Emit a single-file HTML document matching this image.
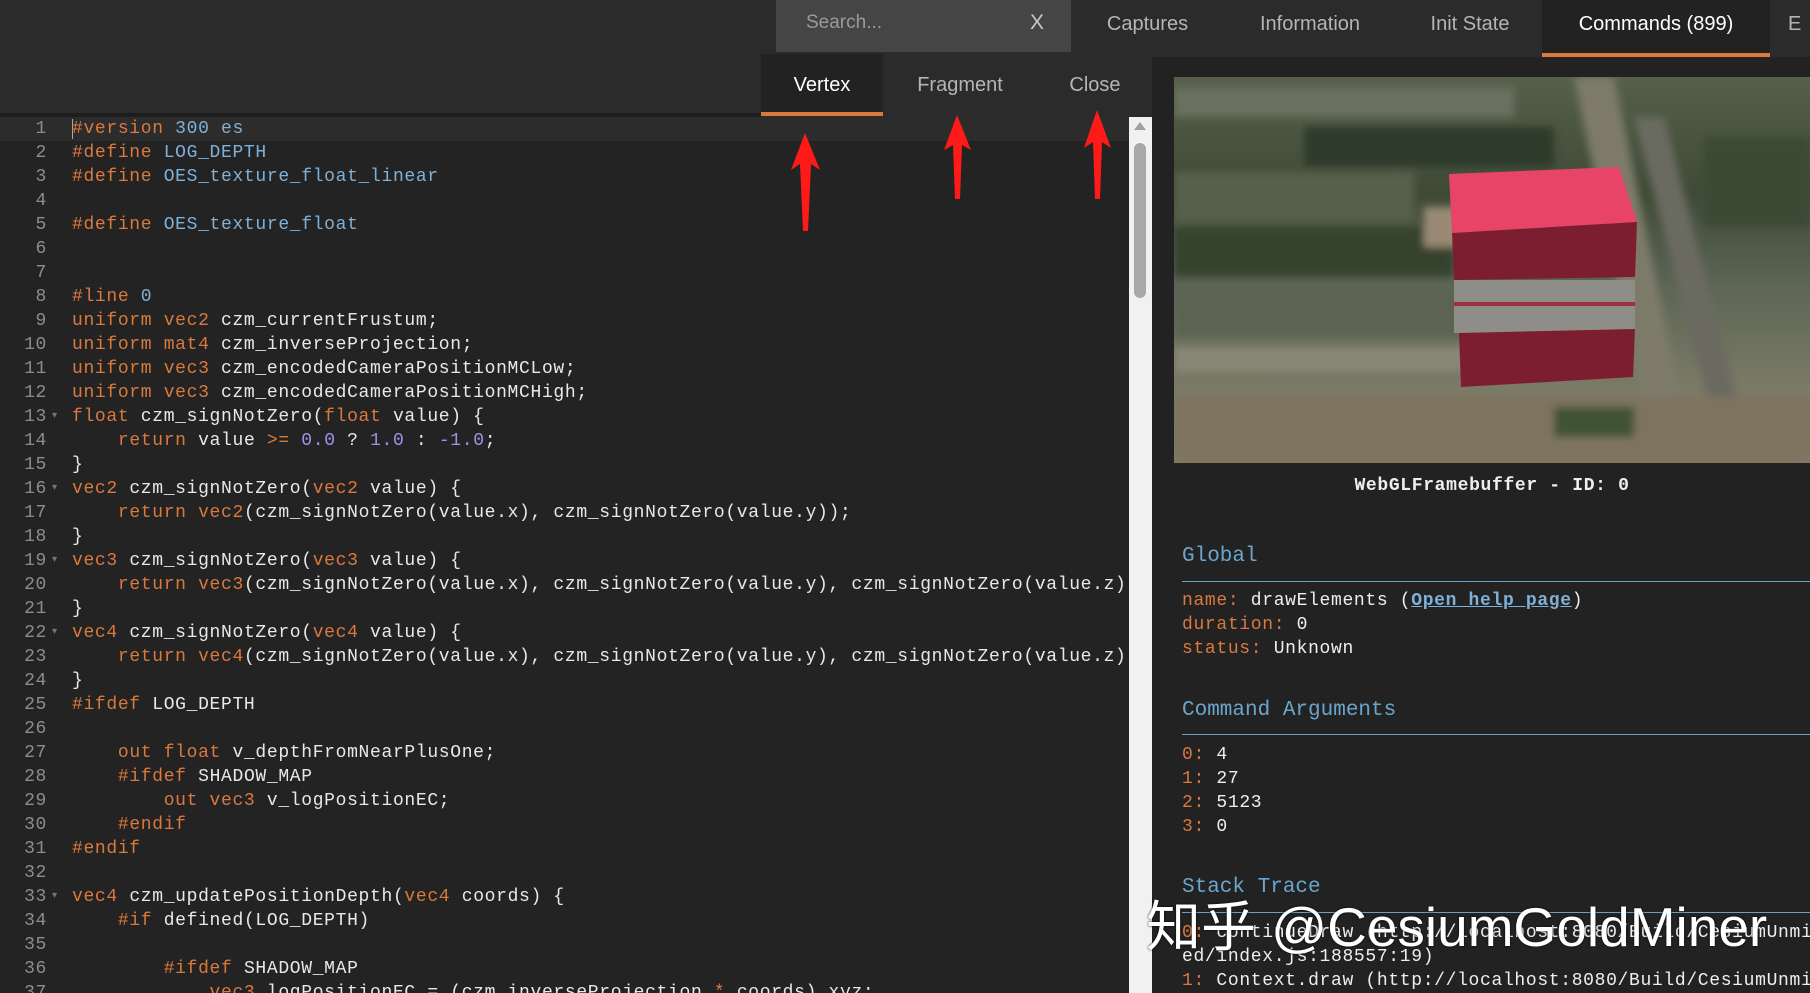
<!DOCTYPE html>
<html><head><meta charset="utf-8"><style>
*{margin:0;padding:0;box-sizing:border-box}
body{width:1810px;height:993px;overflow:hidden;background:#2b2b2b;position:relative;font-family:"Liberation Sans",sans-serif}
.abs{position:absolute}
.tab{position:absolute;top:0;height:54px;line-height:48px;font-size:20px;color:#b5b5b5;text-align:center}
.mono{font-family:"Liberation Mono",monospace;font-size:18px;letter-spacing:0.66px}
#code{position:absolute;left:0;top:117px;width:1129px;height:876px;background:#232323;overflow:hidden}
.ln{position:absolute;left:0;width:1129px;height:24px;line-height:24px;white-space:pre}
.ln .n{position:absolute;right:1082px;color:#8d8d8d;text-align:right}
.ln .t{position:absolute;left:72px;color:#e8e8e8}
.ln .f{position:absolute;left:52px;top:0;color:#777;font-size:10px}
.o{color:#d9793e}.b{color:#7fb0d8}.p{color:#a191ea}
.rt{position:absolute;left:1182px;line-height:24px;color:#eee;white-space:pre}
.k{color:#d9793e}
.h{position:absolute;left:1182px;font-family:"Liberation Mono",monospace;font-size:21px;color:#6aa6cc}
.hl{position:absolute;left:1182px;width:628px;height:1px;background:#6aa0c4}
</style></head><body>
<div class="abs" style="left:776px;top:0;width:295px;height:52px;background:#454545"></div>
<div class="abs" style="left:806px;top:12px;font-size:19px;color:#9a9a9a">Search...</div>
<div class="abs" style="left:1030px;top:11px;font-size:21px;color:#c8c8c8">X</div>
<div class="tab" style="left:1075px;width:145px">Captures</div>
<div class="tab" style="left:1230px;width:160px">Information</div>
<div class="tab" style="left:1400px;width:140px">Init State</div>
<div class="abs" style="left:1542px;top:0;width:228px;height:57px;background:#222"></div>
<div class="tab" style="left:1542px;width:228px;color:#fff">Commands (899)</div>
<div class="abs" style="left:1542px;top:53px;width:228px;height:4px;background:#d9793e"></div>
<div class="tab" style="left:1770px;width:40px;text-align:left;padding-left:18px">E</div>
<div class="abs" style="left:761px;top:54px;width:122px;height:62px;background:#222"></div>
<div class="abs" style="left:761px;top:112px;width:122px;height:4px;background:#d9793e"></div>
<div class="abs" style="left:761px;top:74px;width:122px;text-align:center;font-size:20px;color:#fff">Vertex</div>
<div class="abs" style="left:900px;top:74px;width:120px;text-align:center;font-size:20px;color:#b5b5b5">Fragment</div>
<div class="abs" style="left:1050px;top:74px;width:90px;text-align:center;font-size:20px;color:#b5b5b5">Close</div>
<div class="abs" style="left:0;top:113px;width:761px;height:4px;background:#1d1d1d"></div>
<div id="code" class="mono">
<div class="abs" style="left:0;top:0;width:1129px;height:24px;background:#2c2c2c"></div>
<div class="abs" style="left:72px;top:2px;width:1px;height:20px;background:#aaa"></div>
</div>
<div class="abs" style="left:1129px;top:117px;width:23px;height:876px;background:#f1f1f1"></div>
<div class="abs" style="left:1134px;top:143px;width:12px;height:155px;background:#a8a8a8;border-radius:6px"></div>
<div class="abs" style="left:1134px;top:122px;width:0;height:0;border-left:6px solid transparent;border-right:6px solid transparent;border-bottom:8px solid #a0a0a0"></div>
<div class="abs" style="left:1152px;top:57px;width:658px;height:936px;background:#222"></div>
<svg class="abs" style="left:1174px;top:77px" width="636" height="386" viewBox="0 0 636 386">
<defs><linearGradient id="g" x1="0" y1="0" x2="0" y2="1"><stop offset="0" stop-color="#55604a"/><stop offset="0.3" stop-color="#3f4b37"/><stop offset="0.55" stop-color="#5e6656"/><stop offset="0.8" stop-color="#7a7a66"/><stop offset="1" stop-color="#857c66"/></linearGradient>
<filter id="bl"><feGaussianBlur stdDeviation="4"/></filter></defs>
<rect width="636" height="386" fill="url(#g)"/>
<g filter="url(#bl)">
<rect x="0" y="10" width="340" height="30" fill="#6b7060"/>
<rect x="130" y="50" width="250" height="40" fill="#2f3b2a"/>
<rect x="0" y="95" width="240" height="50" fill="#56604c"/>
<rect x="0" y="150" width="280" height="50" fill="#34432f"/>
<rect x="0" y="210" width="290" height="50" fill="#5c6353"/>
<rect x="0" y="270" width="320" height="25" fill="#888676"/>
<polygon points="400,0 440,0 520,386 480,386" fill="#7d7a6a"/>
<polygon points="460,40 490,40 580,386 550,386" fill="#6a6a60"/>
<rect x="530" y="60" width="106" height="90" fill="#3a4834"/>
<rect x="250" y="130" width="120" height="40" fill="#9a8a74"/>
<rect x="0" y="320" width="636" height="66" fill="#7e735e"/>
<rect x="380" y="330" width="80" height="30" fill="#3f5232"/>
</g>
<polygon points="275,97 445,90 463,145 278,156" fill="#e84468"/>
<polygon points="278,156 463,145 461,200 280,203" fill="#7c1e2f"/>
<rect x="280" y="203" width="181" height="53" fill="#8f8d88"/>
<rect x="280" y="225" width="181" height="4" fill="#9a3040"/>
<polygon points="285,256 461,252 459,300 287,310" fill="#7c1e2f"/>
</svg>
<div class="abs mono" style="left:1174px;top:476px;width:636px;text-align:center;color:#eee;font-weight:bold;font-size:18px">WebGLFramebuffer - ID: 0</div>
<div class="h" style="top:545px">Global</div>
<div class="hl" style="top:581px"></div>
<div class="rt mono" style="top:589px"><span class="k">name:</span> drawElements (<span style="color:#7fb0d8;text-decoration:underline;font-weight:bold">Open help page</span>)</div>
<div class="rt mono" style="top:613px"><span class="k">duration:</span> 0</div>
<div class="rt mono" style="top:637px"><span class="k">status:</span> Unknown</div>
<div class="h" style="top:699px">Command Arguments</div>
<div class="hl" style="top:734px"></div>
<div class="rt mono" style="top:743px"><span class="k">0:</span> 4</div>
<div class="rt mono" style="top:767px"><span class="k">1:</span> 27</div>
<div class="rt mono" style="top:791px"><span class="k">2:</span> 5123</div>
<div class="rt mono" style="top:815px"><span class="k">3:</span> 0</div>
<div class="h" style="top:876px">Stack Trace</div>
<div class="hl" style="top:912px"></div>
<div class="rt mono" style="top:921px"><span class="k">0:</span> continueDraw (http://localhost:8080/Build/CesiumUnmi</div>
<div class="rt mono" style="top:945px">ed/index.js:188557:19)</div>
<div class="rt mono" style="top:969px"><span class="k">1:</span> Context.draw (http://localhost:8080/Build/CesiumUnmi</div>
<div class="abs" style="left:1146px;top:882px;font-family:'Liberation Sans','Noto Sans CJK SC',sans-serif;font-size:55px;color:#fff;white-space:nowrap;text-shadow:0 0 2px #000">知乎 @CesiumGoldMiner</div>
<svg class="abs" style="left:0;top:0" width="1810" height="993">
<g fill="#ff1a1a">
<polygon points="805,133 791,170 800,164 803,231 808,231 811,164 820,170"/>
<polygon points="957,115 944,150 953,145 955,199 960,199 962,145 971,150"/>
<polygon points="1097,110 1084,148 1093,142 1095,199 1100,199 1102,142 1111,148"/>
</g></svg>
<script>
var L=[
'<span class="o">#version</span> <span class="b">300 es</span>',
'<span class="o">#define</span> <span class="b">LOG_DEPTH</span>',
'<span class="o">#define</span> <span class="b">OES_texture_float_linear</span>',
'',
'<span class="o">#define</span> <span class="b">OES_texture_float</span>',
'','',
'<span class="o">#line</span> <span class="b">0</span>',
'<span class="o">uniform vec2</span> czm_currentFrustum;',
'<span class="o">uniform mat4</span> czm_inverseProjection;',
'<span class="o">uniform vec3</span> czm_encodedCameraPositionMCLow;',
'<span class="o">uniform vec3</span> czm_encodedCameraPositionMCHigh;',
'<span class="o">float</span> czm_signNotZero(<span class="o">float</span> value) {',
'    <span class="o">return</span> value <span class="o">&gt;=</span> <span class="p">0.0</span> ? <span class="p">1.0</span> : <span class="p">-1.0</span>;',
'}',
'<span class="o">vec2</span> czm_signNotZero(<span class="o">vec2</span> value) {',
'    <span class="o">return vec2</span>(czm_signNotZero(value.x), czm_signNotZero(value.y));',
'}',
'<span class="o">vec3</span> czm_signNotZero(<span class="o">vec3</span> value) {',
'    <span class="o">return vec3</span>(czm_signNotZero(value.x), czm_signNotZero(value.y), czm_signNotZero(value.z));',
'}',
'<span class="o">vec4</span> czm_signNotZero(<span class="o">vec4</span> value) {',
'    <span class="o">return vec4</span>(czm_signNotZero(value.x), czm_signNotZero(value.y), czm_signNotZero(value.z));',
'}',
'<span class="o">#ifdef</span> LOG_DEPTH',
'',
'    <span class="o">out float</span> v_depthFromNearPlusOne;',
'    <span class="o">#ifdef</span> SHADOW_MAP',
'        <span class="o">out vec3</span> v_logPositionEC;',
'    <span class="o">#endif</span>',
'<span class="o">#endif</span>',
'',
'<span class="o">vec4</span> czm_updatePositionDepth(<span class="o">vec4</span> coords) {',
'    <span class="o">#if</span> defined(LOG_DEPTH)',
'',
'        <span class="o">#ifdef</span> SHADOW_MAP',
'            <span class="o">vec3</span> logPositionEC = (czm_inverseProjection <span class="o">*</span> coords).xyz;'
];
var fold={13:1,16:1,19:1,22:1,33:1};
var c=document.getElementById('code'),h='';
for(var i=0;i<L.length;i++){
 h+='<div class="ln" style="top:'+(i*24)+'px"><span class="n">'+(i+1)+'</span>'+(fold[i+1]?'<span class="f">&#9662;</span>':'')+'<span class="t">'+L[i]+'</span></div>';
}
c.insertAdjacentHTML('beforeend',h);
</script>
</body></html>
